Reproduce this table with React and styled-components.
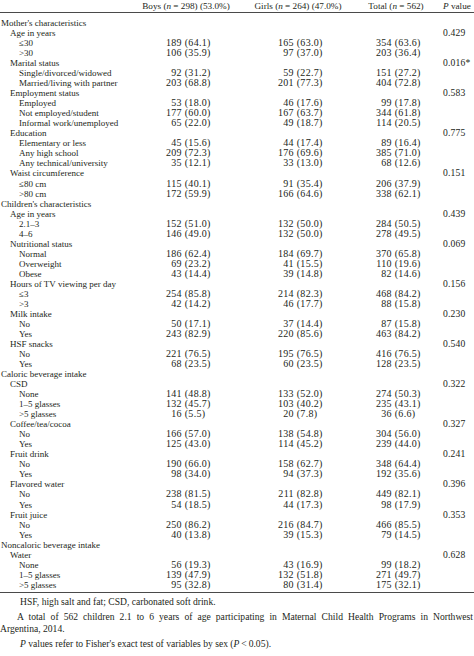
import React from 'react';
import styled, { createGlobalStyle } from 'styled-components';

const GlobalStyle = createGlobalStyle`
  html, body {
    margin: 0;
    padding: 0;
    background: #fff;
    overflow: hidden;
  }
  body {
    font-family: "Liberation Serif", "Times New Roman", serif;
    color: #231f20;
  }
`;

const rows = [
  { label: "Mother's characteristics", level: 0 },
  { label: 'Age in years', level: 1, p: '0.429' },
  { label: '≤30', level: 2, v: [[189, '64.1'], [165, '63.0'], [354, '63.6']] },
  { label: '>30', level: 2, v: [[106, '35.9'], [97, '37.0'], [203, '36.4']] },
  { label: 'Marital status', level: 1, p: '0.016*' },
  { label: 'Single/divorced/widowed', level: 2, v: [[92, '31.2'], [59, '22.7'], [151, '27.2']] },
  { label: 'Married/living with partner', level: 2, v: [[203, '68.8'], [201, '77.3'], [404, '72.8']] },
  { label: 'Employment status', level: 1, p: '0.583' },
  { label: 'Employed', level: 2, v: [[53, '18.0'], [46, '17.6'], [99, '17.8']] },
  { label: 'Not employed/student', level: 2, v: [[177, '60.0'], [167, '63.7'], [344, '61.8']] },
  { label: 'Informal work/unemployed', level: 2, v: [[65, '22.0'], [49, '18.7'], [114, '20.5']] },
  { label: 'Education', level: 1, p: '0.775' },
  { label: 'Elementary or less', level: 2, v: [[45, '15.6'], [44, '17.4'], [89, '16.4']] },
  { label: 'Any high school', level: 2, v: [[209, '72.3'], [176, '69.6'], [385, '71.0']] },
  { label: 'Any technical/university', level: 2, v: [[35, '12.1'], [33, '13.0'], [68, '12.6']] },
  { label: 'Waist circumference', level: 1, p: '0.151' },
  { label: '≤80 cm', level: 2, v: [[115, '40.1'], [91, '35.4'], [206, '37.9']] },
  { label: '>80 cm', level: 2, v: [[172, '59.9'], [166, '64.6'], [338, '62.1']] },
  { label: "Children's characteristics", level: 0 },
  { label: 'Age in years', level: 1, p: '0.439' },
  { label: '2.1–3', level: 2, v: [[152, '51.0'], [132, '50.0'], [284, '50.5']] },
  { label: '4–6', level: 2, v: [[146, '49.0'], [132, '50.0'], [278, '49.5']] },
  { label: 'Nutritional status', level: 1, p: '0.069' },
  { label: 'Normal', level: 2, v: [[186, '62.4'], [184, '69.7'], [370, '65.8']] },
  { label: 'Overweight', level: 2, v: [[69, '23.2'], [41, '15.5'], [110, '19.6']] },
  { label: 'Obese', level: 2, v: [[43, '14.4'], [39, '14.8'], [82, '14.6']] },
  { label: 'Hours of TV viewing per day', level: 1, p: '0.156' },
  { label: '≤3', level: 2, v: [[254, '85.8'], [214, '82.3'], [468, '84.2']] },
  { label: '>3', level: 2, v: [[42, '14.2'], [46, '17.7'], [88, '15.8']] },
  { label: 'Milk intake', level: 1, p: '0.230' },
  { label: 'No', level: 2, v: [[50, '17.1'], [37, '14.4'], [87, '15.8']] },
  { label: 'Yes', level: 2, v: [[243, '82.9'], [220, '85.6'], [463, '84.2']] },
  { label: 'HSF snacks', level: 1, p: '0.540' },
  { label: 'No', level: 2, v: [[221, '76.5'], [195, '76.5'], [416, '76.5']] },
  { label: 'Yes', level: 2, v: [[68, '23.5'], [60, '23.5'], [128, '23.5']] },
  { label: 'Caloric beverage intake', level: 0 },
  { label: 'CSD', level: 1, p: '0.322' },
  { label: 'None', level: 2, v: [[141, '48.8'], [133, '52.0'], [274, '50.3']] },
  { label: '1–5 glasses', level: 2, v: [[132, '45.7'], [103, '40.2'], [235, '43.1']] },
  { label: '>5 glasses', level: 2, v: [[16, '5.5'], [20, '7.8'], [36, '6.6']] },
  { label: 'Coffee/tea/cocoa', level: 1, p: '0.327' },
  { label: 'No', level: 2, v: [[166, '57.0'], [138, '54.8'], [304, '56.0']] },
  { label: 'Yes', level: 2, v: [[125, '43.0'], [114, '45.2'], [239, '44.0']] },
  { label: 'Fruit drink', level: 1, p: '0.241' },
  { label: 'No', level: 2, v: [[190, '66.0'], [158, '62.7'], [348, '64.4']] },
  { label: 'Yes', level: 2, v: [[98, '34.0'], [94, '37.3'], [192, '35.6']] },
  { label: 'Flavored water', level: 1, p: '0.396' },
  { label: 'No', level: 2, v: [[238, '81.5'], [211, '82.8'], [449, '82.1']] },
  { label: 'Yes', level: 2, v: [[54, '18.5'], [44, '17.3'], [98, '17.9']] },
  { label: 'Fruit juice', level: 1, p: '0.353' },
  { label: 'No', level: 2, v: [[250, '86.2'], [216, '84.7'], [466, '85.5']] },
  { label: 'Yes', level: 2, v: [[40, '13.8'], [39, '15.3'], [79, '14.5']] },
  { label: 'Noncaloric beverage intake', level: 0 },
  { label: 'Water', level: 1, p: '0.628' },
  { label: 'None', level: 2, v: [[56, '19.3'], [43, '16.9'], [99, '18.2']] },
  { label: '1–5 glasses', level: 2, v: [[139, '47.9'], [132, '51.8'], [271, '49.7']] },
  { label: '>5 glasses', level: 2, v: [[95, '32.8'], [80, '31.4'], [175, '32.1']] },
];

const Page = styled.div`
  width: 474px;
  height: 656px;
  overflow: hidden;
`;

const Table = styled.div`
  border-bottom: 1px solid #4a4a4a;
  padding-bottom: 2px;
`;

const Grid = styled.div`
  display: grid;
  grid-template-columns: 130px 112px 112px 84px 1fr;
  align-items: center;
`;

const HeadRow = styled(Grid)`
  height: 12px;
  border-bottom: 1px solid #4a4a4a;
  font-size: 9.2px;
  line-height: 12px;
  white-space: nowrap;
`;

const HeadCell = styled.div`
  text-align: ${(p) => (p.$left ? 'left' : 'center')};
  padding-left: ${(p) => (p.$left ? '5px' : '0')};
`;

const Body = styled.div`
  padding-top: 5px;
`;

const Row = styled(Grid)`
  height: 10.04px;
  line-height: 10.04px;
  font-size: 9px;
  white-space: nowrap;
`;

const Label = styled.div`
  padding-left: ${(p) => [1, 10, 19][p.$level]}px;
`;

const ValCell = styled.div`
  display: flex;
  justify-content: center;
`;

const Val = styled.span`
  display: inline-block;
  width: 40px;
  font-size: 10px;
  letter-spacing: 0.3px;
  text-align: left;
`;

const Count = styled.span`
  display: inline-block;
  width: 15.9px;
  text-align: right;
`;

const PCell = styled.div`
  padding-left: 5px;
  font-size: 9.6px;
  letter-spacing: 0.2px;
`;

const Notes = styled.div`
  padding-top: 3px;
  font-size: 9.6px;
  line-height: 12.5px;
`;

const Note = styled.p`
  margin: 0 0 2.5px;
  text-indent: ${(p) => p.$indent}px;
  white-space: nowrap;
`;

const JustLine = styled.div`
  width: 473px;
  text-indent: 17px;
  text-align: justify;
  text-align-last: justify;
`;

const Value = ({ n, pct }) => (
  <ValCell>
    <Val>
      <Count>{n}</Count> ({pct})
    </Val>
  </ValCell>
);

export default function App() {
  return (
    <Page>
      <GlobalStyle />
      <Table>
        <HeadRow>
          <HeadCell />
          <HeadCell>Boys (<i>n</i> = 298) (53.0%)</HeadCell>
          <HeadCell>Girls (<i>n</i> = 264) (47.0%)</HeadCell>
          <HeadCell>Total (<i>n</i> = 562)</HeadCell>
          <HeadCell $left>
            <i>P</i> value
          </HeadCell>
        </HeadRow>
        <Body>
          {rows.map((r, i) => (
            <Row key={i}>
              <Label $level={r.level}>{r.label}</Label>
              {r.v ? r.v.map(([n, pct], j) => <Value key={j} n={n} pct={pct} />) : (
                <>
                  <div />
                  <div />
                  <div />
                </>
              )}
              <PCell>{r.p || ''}</PCell>
            </Row>
          ))}
        </Body>
      </Table>
      <Notes>
        <Note $indent={20}>HSF, high salt and fat; CSD, carbonated soft drink.</Note>
        <Note $indent={0}>
          <JustLine>
            A total of 562 children 2.1 to 6 years of age participating in Maternal Child Health Programs in Northwest
          </JustLine>
          Argentina, 2014.
        </Note>
        <Note $indent={20}>
          <i>P</i> values refer to Fisher's exact test of variables by sex (<i>P</i>&thinsp;&lt;&thinsp;0.05).
        </Note>
      </Notes>
    </Page>
  );
}
